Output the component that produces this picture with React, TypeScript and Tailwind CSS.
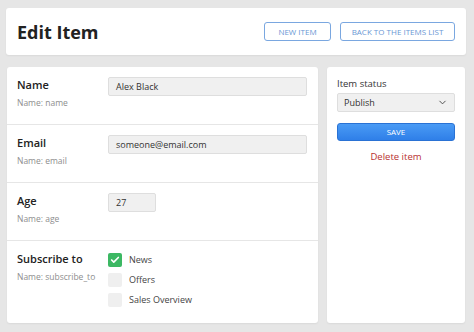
import { Check, ChevronDown } from "lucide-react";

const font = { fontFamily: '"Open Sans", "Noto Sans", sans-serif' };

const Row = ({ label, hint, children, last }: any) => (
  <div className={`flex px-[10px] pt-[10px] h-[58px] ${last ? "" : "border-b border-[#e6e6e6]"}`}>
    <div className="w-[91px] shrink-0">
      <div className="text-[11px] font-semibold text-[#222] leading-[14px] mt-[1px]">{label}</div>
      <div className="text-[8.5px] text-[#8e8e8e] mt-[5px] leading-[12px]">{hint}</div>
    </div>
    <div className="flex-1">{children}</div>
  </div>
);

const TextInput = ({ value, w }: any) => (
  <div className={`${w} h-[19px] bg-[#f0f0f0] border border-[#dedede] rounded-[2px] text-[9px] text-[#333] px-[7px] flex items-center`}>
    {value}
  </div>
);

const CheckItem = ({ label, checked }: any) => (
  <div className="flex items-center gap-[7px] h-[14px] mb-[6px]">
    <div
      className={`w-[14px] h-[14px] rounded-[2px] flex items-center justify-center ${
        checked ? "bg-[#3cb863]" : "bg-[#efefef]"
      }`}
    >
      {checked && <Check className="w-[10px] h-[10px] text-white" strokeWidth={4} />}
    </div>
    <span className="text-[9px] text-[#444]">{label}</span>
  </div>
);

export default function App() {
  return (
    <div className="w-[474px] h-[332px] bg-[#e6e6e6] pt-[8px] pl-[6px] pr-[8px]" style={font}>
      {/* Header */}
      <div className="h-[47px] bg-white rounded-[3px] flex items-center px-[11px] shadow-[0_1px_2px_rgba(0,0,0,0.06)]">
        <h1 className="text-[18px] font-bold text-[#222] flex-1 mt-[1px]">Edit Item</h1>
        <button className="w-[67px] h-[19px] border border-[#7aa7e0] rounded-[3px] text-[8px] text-[#6a97d4] mr-[9px]">
          NEW ITEM
        </button>
        <button className="w-[115px] h-[19px] border border-[#7aa7e0] rounded-[3px] text-[8px] text-[#6a97d4]">
          BACK TO THE ITEMS LIST
        </button>
      </div>

      <div className="flex mt-[12px] gap-[9px]">
        {/* Form */}
        <div className="w-[311px] ml-[1px] h-[256px] bg-white rounded-[3px] shadow-[0_1px_2px_rgba(0,0,0,0.06)]">
          <Row label="Name" hint="Name: name">
            <TextInput value="Alex Black" w="w-[199px]" />
          </Row>
          <Row label="Email" hint="Name: email">
            <TextInput value="someone@email.com" w="w-[199px]" />
          </Row>
          <Row label="Age" hint="Name: age">
            <TextInput value="27" w="w-[48px]" />
          </Row>
          <Row label="Subscribe to" hint="Name: subscribe_to" last>
            <div className="pt-[2px]">
              <CheckItem label="News" checked />
              <CheckItem label="Offers" />
              <CheckItem label="Sales Overview" />
            </div>
          </Row>
        </div>

        {/* Sidebar */}
        <div className="w-[138px] h-[256px] bg-white rounded-[3px] px-[10px] pt-[11px] shadow-[0_1px_2px_rgba(0,0,0,0.06)]">
          <div className="text-[9.5px] text-[#333] leading-[12px]">Item status</div>
          <div className="mt-[3px] h-[19px] bg-[#f0f0f0] border border-[#dedede] rounded-[2px] flex items-center justify-between px-[6px]">
            <span className="text-[9px] text-[#333]">Publish</span>
            <ChevronDown className="w-[11px] h-[11px] text-[#444]" strokeWidth={2} />
          </div>
          <button className="mt-[11px] w-full h-[18px] rounded-[3px] bg-gradient-to-b from-[#4a9bf5] to-[#2f7fe8] border border-[#2a72d4] text-white text-[8px]">
            SAVE
          </button>
          <div className="mt-[9px] text-center text-[9.5px] text-[#b8312f]">Delete item</div>
        </div>
      </div>
    </div>
  );
}
